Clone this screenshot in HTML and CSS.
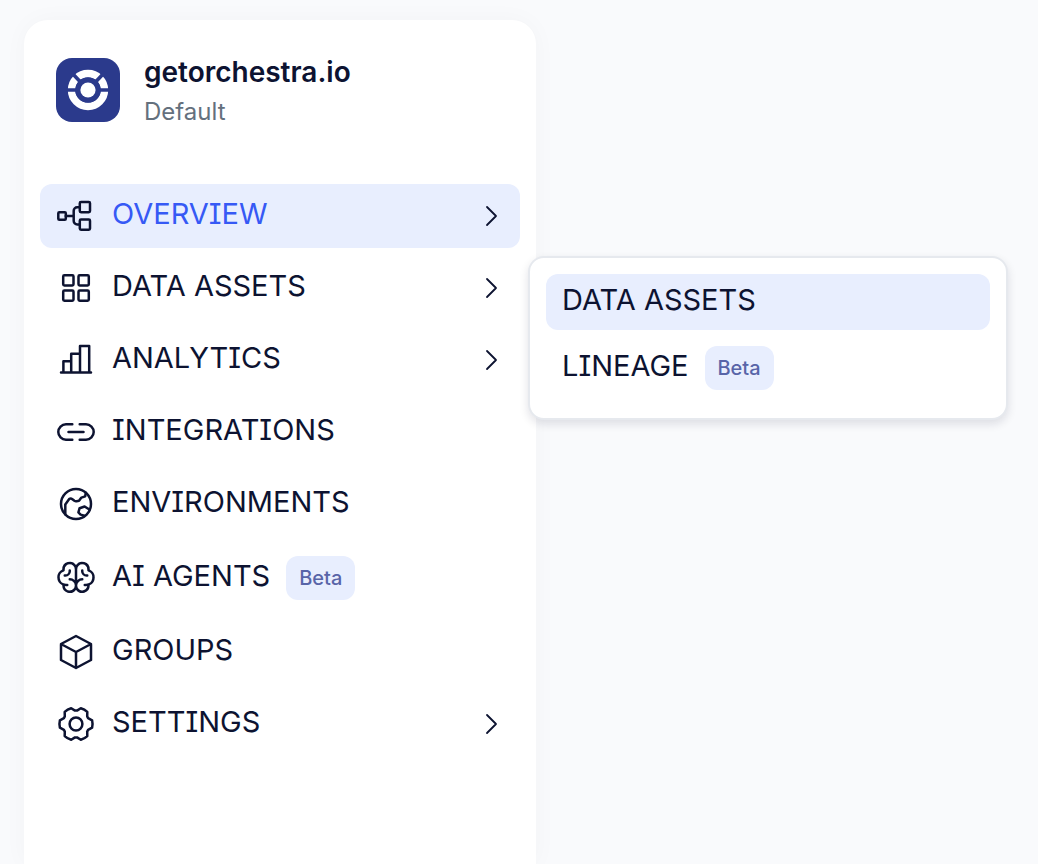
FILE: index.html
```html
<!DOCTYPE html>
<html lang="en">
<head>
<meta charset="utf-8">
<meta name="viewport" content="width=device-width, initial-scale=1">
<title>getorchestra.io</title>
<link rel="stylesheet" href="styles.css">
</head>
<body>
<aside class="sidebar">
  <header class="workspace">
    <svg class="logo" viewBox="0 0 64 64" aria-hidden="true">
      <rect width="64" height="64" rx="16" fill="#2b3a8c"/>
      <circle cx="32" cy="32" r="16.5" fill="none" stroke="#fff" stroke-width="7.4"/>
      <path d="M10 32H54M32 32L15 14M32 32L49 14" stroke="#2b3a8c" stroke-width="3.6"/>
      <circle cx="32" cy="32" r="12.6" fill="#2b3a8c"/>
      <circle cx="32" cy="32" r="7.6" fill="#fff"/>
    </svg>
    <div class="workspace-text">
      <strong class="workspace-name">getorchestra.io</strong>
      <span class="workspace-env">Default</span>
    </div>
  </header>
  <nav class="menu" aria-label="Main">
    <button class="item item-active" type="button">
      <svg class="icon" viewBox="0 0 40 40"><rect x="2.3" y="16.2" width="7.5" height="7.5" rx="1"/><rect x="23.8" y="6" width="10.2" height="10.2" rx="1.2"/><rect x="23.8" y="23.6" width="10.2" height="10.2" rx="1.2"/><path d="M9.8 20H17.7M23.8 11.3H21.2A3.5 3.5 0 0 0 17.7 14.8V25A3.5 3.5 0 0 0 21.2 28.5H23.8"/></svg>
      <span class="label">OVERVIEW</span>
      <svg class="chevron" viewBox="0 0 24 24"><path d="M7 3L16 12L7 21"/></svg>
    </button>
    <button class="item" type="button">
      <svg class="icon" viewBox="0 0 40 40"><rect x="7.2" y="7.2" width="10.3" height="10.3" rx="1.2"/><rect x="22.5" y="7.2" width="10.3" height="10.3" rx="1.2"/><rect x="7.2" y="22.5" width="10.3" height="10.3" rx="1.2"/><rect x="22.5" y="22.5" width="10.3" height="10.3" rx="1.2"/></svg>
      <span class="label">DATA ASSETS</span>
      <svg class="chevron" viewBox="0 0 24 24"><path d="M7 3L16 12L7 21"/></svg>
    </button>
    <button class="item" type="button">
      <svg class="icon" viewBox="0 0 40 40"><path d="M5 32.4H35M7.4 32.4V21.3H15.2M15.2 32.4V13.8H24M24 32.4V6H33.2V32.4"/></svg>
      <span class="label">ANALYTICS</span>
      <svg class="chevron" viewBox="0 0 24 24"><path d="M7 3L16 12L7 21"/></svg>
    </button>
    <a class="item" href="#integrations">
      <svg class="icon" viewBox="0 0 40 40"><path d="M12.5 20H27.5M16.3 27.7H10A7.7 7.7 0 0 1 10 12.3H16.3M23.7 12.3H30A7.7 7.7 0 0 1 30 27.7H23.7"/></svg>
      <span class="label">INTEGRATIONS</span>
    </a>
    <a class="item" href="#environments">
      <svg class="icon" viewBox="0 0 40 40"><circle cx="20" cy="20" r="15"/><path d="M9.3 30.2V20.4L13.4 14.8Q14.8 14 16.4 15.2L18.4 16.8Q19.4 17.4 20.6 17.2L23 16.8L25.4 13.6L29.2 12.4L29.8 8.8M33.8 25.7L28.6 22.5L23.6 24.2L22.4 28.3L24.6 30.6L28.4 31.6"/></svg>
      <span class="label">ENVIRONMENTS</span>
    </a>
    <a class="item" href="#agents">
      <svg class="icon icon-solid" viewBox="0 0 256 256"><path d="M248,124a56.11,56.11,0,0,0-32-50.61V72a48,48,0,0,0-88-26.49A48,48,0,0,0,40,72v1.39a56,56,0,0,0,0,101.2V176a48,48,0,0,0,88,26.49A48,48,0,0,0,216,176v-1.41A56.09,56.09,0,0,0,248,124ZM88,208a32,32,0,0,1-31.81-28.56A55.87,55.87,0,0,0,64,180h8a8,8,0,0,0,0-16H64A40,40,0,0,1,50.67,86.27,8,8,0,0,0,56,78.73V72a32,32,0,0,1,64,0v68.26A47.8,47.8,0,0,0,88,128a8,8,0,0,0,0,16,32,32,0,0,1,0,64Zm104-44h-8a8,8,0,0,0,0,16h8a55.87,55.87,0,0,0,7.81-.56A32,32,0,1,1,168,144a8,8,0,0,0,0-16,47.8,47.8,0,0,0-32,12.26V72a32,32,0,0,1,64,0v6.73a8,8,0,0,0,5.33,7.54A40,40,0,0,1,192,164Zm16-52a8,8,0,0,1-8,8h-4a36,36,0,0,1-36-36V80a8,8,0,0,1,16,0v4a20,20,0,0,0,20,20h4A8,8,0,0,1,208,112ZM60,120H56a8,8,0,0,1,0-16h4A20,20,0,0,0,80,84V80a8,8,0,0,1,16,0v4A36,36,0,0,1,60,120Z"/></svg>
      <span class="label">AI AGENTS</span>
      <span class="badge">Beta</span>
    </a>
    <a class="item" href="#groups">
      <svg class="icon" viewBox="0 0 40 40"><path d="M20 4L35 12V28L20 36L5 28V12ZM5 12L20 20L35 12M20 20V36"/></svg>
      <span class="label">GROUPS</span>
    </a>
    <button class="item" type="button">
      <svg class="icon" viewBox="-20 -20 40 40"><circle r="6.4"/><path d="M16.1 -3.7Q17 0 16.1 3.7L12.1 5.9L11.2 7.6L11.3 12.1Q8.5 14.7 4.8 15.8L1 13.4H-1L-4.8 15.8Q-8.5 14.7 -11.3 12.1L-11.2 7.6L-12.1 5.9L-16.1 3.7Q-17 0 -16.1 -3.7L-12.1 -5.9L-11.2 -7.6L-11.3 -12.1Q-8.5 -14.7 -4.8 -15.8L-1 -13.4H1L4.8 -15.8Q8.5 -14.7 11.3 -12.1L11.2 -7.6L12.1 -5.9Z"/></svg>
      <span class="label">SETTINGS</span>
      <svg class="chevron" viewBox="0 0 24 24"><path d="M7 3L16 12L7 21"/></svg>
    </button>
  </nav>
  <div class="flyout">
    <a class="subitem subitem-active" href="#data-assets"><span class="label">DATA ASSETS</span></a>
    <a class="subitem" href="#lineage"><span class="label">LINEAGE</span><span class="badge">Beta</span></a>
  </div>
</aside>
</body>
</html>
```
FILE: styles.css
```css
* { box-sizing: border-box; }

body {
  margin: 0;
  padding: 20px 24px 0;
  background: #f9fafc;
  color: #0d1331;
  font-family: Inter, "Liberation Sans", sans-serif;
}

.sidebar {
  position: relative;
  width: 512px;
  min-height: calc(100vh - 20px);
  padding: 30px 16px 0;
  background: #fff;
  border-radius: 24px 24px 0 0;
  box-shadow: 0 0 24px rgba(13, 19, 49, 0.03);
}

.workspace {
  display: flex;
  align-items: center;
  gap: 24px;
  padding: 0 16px;
  margin-bottom: 54px;
}

.logo { width: 64px; height: 64px; flex: none; }

.workspace-text { display: flex; flex-direction: column; }

.workspace-name { font-size: 28px; font-weight: 600; line-height: 44px; }

.workspace-env { font-size: 24px; line-height: 36px; color: #64707d; }

.menu { display: flex; flex-direction: column; gap: 8px; }

.item,
.subitem {
  display: flex;
  align-items: center;
  gap: 16px;
  width: 100%;
  padding: 12px 16px;
  border: 0;
  border-radius: 12px;
  background: none;
  color: inherit;
  font: inherit;
  text-align: left;
  text-decoration: none;
  cursor: pointer;
}

.item { min-height: 64px; }
.subitem { min-height: 56px; }

.item-active,
.subitem-active { background: #e8eefe; }

.item-active .label { color: #3659f5; }

.label {
  padding-bottom: 4px;
  font-size: 29px;
  line-height: 28px;
  font-feature-settings: "ss02", "cv08";
}

.icon,
.chevron {
  flex: none;
  fill: none;
  stroke: #0d1331;
  stroke-linecap: round;
  stroke-linejoin: round;
}

.icon { width: 40px; height: 40px; stroke-width: 2.5; }
.icon-solid { fill: #0d1331; stroke: none; }
.chevron { width: 24px; height: 24px; margin-left: auto; stroke-width: 1.8; }

.badge {
  min-width: 69px;
  padding: 0 12px;
  border-radius: 12px;
  background: #e8eefe;
  color: #5864a8;
  font-size: 20px;
  font-weight: 500;
  line-height: 44px;
  text-align: center;
}

.flyout {
  position: absolute;
  top: 236px;
  left: 504px;
  display: flex;
  flex-direction: column;
  gap: 4px;
  width: 480px;
  padding: 16px;
  border: 2px solid #e6e9ee;
  border-radius: 16px;
  background: #fff;
  box-shadow: 0 4px 10px rgba(13, 19, 49, 0.12);
}
```
